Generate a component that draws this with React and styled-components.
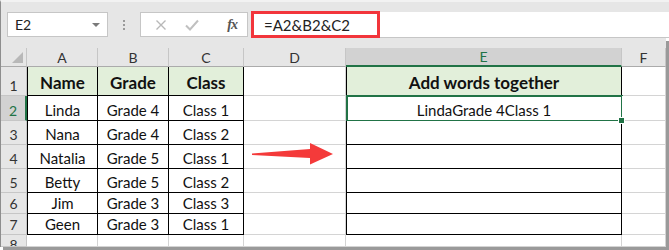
import React from "react"
import styled, { createGlobalStyle } from "styled-components"

const Global = createGlobalStyle`
  html, body {
    margin: 0;
    padding: 0;
    background: #ffffff;
  }
  body {
    font-family: Lato, "Open Sans", sans-serif;
  }
`

const Frame = styled.div`
  width: 669px;
  height: 250px;
  overflow: hidden;
  background: #ffffff;
  display: flex;
  flex-direction: column;
`

const Toolbar = styled.div`
  height: 38px;
  box-sizing: border-box;
  background: #e6e6e6;
  border-left: 1px solid #8e8e8e;
  border-top: 2px solid #f2f2f2;
  padding-top: 10px;
  display: flex;
  align-items: stretch;
`

const NameBox = styled.div`
  width: 101px;
  height: 25px;
  box-sizing: border-box;
  margin-left: 6px;
  background: #ffffff;
  border: 1px solid #c6c6c6;
  display: flex;
  align-items: center;
  justify-content: space-between;
  padding: 0 7px 0 7px;
  font-size: 14px;
  color: #222;
`

const Caret = styled.span`
  width: 0;
  height: 0;
  border-left: 4px solid transparent;
  border-right: 4px solid transparent;
  border-top: 4px solid #7a7a7a;
`

const Dots = styled.div`
  width: 32px;
  display: flex;
  flex-direction: column;
  align-items: center;
  justify-content: center;
  gap: 2px;
  span {
    width: 2px;
    height: 2px;
    background: #9a9a9a;
  }
`

const FxBox = styled.div`
  width: 108px;
  height: 25px;
  box-sizing: border-box;
  background: #ffffff;
  border: 1px solid #c6c6c6;
  display: flex;
  align-items: center;
  padding: 0 10px 0 14px;
  gap: 18px;
  color: #b8b8b8;
`

const Fx = styled.span`
  margin-left: auto;
  font-family: "Liberation Serif", serif;
  font-style: italic;
  font-weight: bold;
  font-size: 14px;
  color: #555;
  letter-spacing: -1px;
`

const FormulaBar = styled.div`
  flex: 1;
  margin-left: 3px;
  height: 26px;
  box-sizing: border-box;
  background: #ffffff;
  border-bottom: 1px solid #c6c6c6;
  display: flex;
`

const Highlight = styled.div`
  width: 129px;
  height: 27px;
  margin-top: -1px;
  box-sizing: border-box;
  border: 3px solid #f2353b;
  display: flex;
  align-items: center;
  padding-left: 10px;
  font-size: 15px;
  color: #222;
`

const SheetWrap = styled.div`
  position: relative;
  width: 666px;
  height: 209px;
  box-sizing: border-box;
  background: #e6e6e6;
  border-left: 1px solid #8e8e8e;
  padding-top: 10px;
  box-shadow: 3px 3px 0 #9a9a9a;
`

const Grid = styled.div`
  display: grid;
  grid-template-columns: 26px 71px 71px 75px 102px 276px 44px;
  grid-template-rows: 19px 29px 25px 24px 24px 24px 21px 21px 12px;
  background: #ffffff;
`

const Corner = styled.div`
  position: relative;
  background: #e6e6e6;
  border-right: 1px solid #c6c6c6;
  border-bottom: 1px solid #ababab;
  &::after {
    content: "";
    position: absolute;
    right: 3px;
    bottom: 3px;
    border-left: 11px solid transparent;
    border-bottom: 11px solid #b8b8b8;
  }
`

const ColHead = styled.div`
  background: ${p => (p.$active ? "#d2d2d2" : "#e6e6e6")};
  color: ${p => (p.$active ? "#217346" : "#333")};
  border-right: 1px solid #c6c6c6;
  border-bottom: ${p => (p.$active ? "2px solid #217346" : "1px solid #ababab")};
  display: flex;
  align-items: center;
  justify-content: center;
  font-size: 14px;
`

const RowHead = styled.div`
  background: ${p => (p.$active ? "#d2d2d2" : "#e6e6e6")};
  color: ${p => (p.$active ? "#217346" : "#333")};
  border-right: ${p => (p.$active ? "2px solid #217346" : "1px solid #c6c6c6")};
  border-bottom: 1px solid #c6c6c6;
  display: flex;
  align-items: ${p => (p.$clipped ? "flex-start" : "flex-end")};
  justify-content: center;
  padding: ${p => (p.$clipped ? "2px 0 0" : "0 0 1px")};
  line-height: 16px;
  font-size: 14px;
  overflow: hidden;
`

const Cell = styled.div`
  position: relative;
  box-sizing: border-box;
  background: ${p => (p.$fill ? "#e2efda" : "#ffffff")};
  border-right: 1px solid ${p => (p.$boxed ? "#000" : "#d4d4d4")};
  border-bottom: 1px solid ${p => (p.$boxed ? "#000" : "#d4d4d4")};
  border-left: ${p => (p.$openLeft ? "1px solid #000" : "none")};
  display: flex;
  align-items: flex-end;
  justify-content: center;
  padding-bottom: ${p => (p.$bold ? "2px" : "1px")};
  font-size: ${p => (p.$bold ? "17px" : "15px")};
  font-weight: ${p => (p.$bold ? 700 : 400)};
  color: #111;
  white-space: nowrap;
  ${p =>
    p.$selected &&
    `
    &::after {
      content: "";
      position: absolute;
      left: -1px;
      top: -1px;
      right: -2px;
      bottom: -2px;
      border: 2px solid #217346;
    }
    &::before {
      content: "";
      position: absolute;
      right: -4px;
      bottom: -4px;
      width: 5px;
      height: 5px;
      background: #217346;
      border: 1px solid #fff;
      z-index: 2;
    }
  `}
`

const Arrow = styled.svg`
  position: absolute;
  left: 251px;
  top: 105px;
`

const cols = ["A", "B", "C", "D", "E", "F"]

const people = [
  ["Name", "Grade", "Class"],
  ["Linda", "Grade 4", "Class 1"],
  ["Nana", "Grade 4", "Class 2"],
  ["Natalia", "Grade 5", "Class 1"],
  ["Betty", "Grade 5", "Class 2"],
  ["Jim", "Grade 3", "Class 3"],
  ["Geen", "Grade 3", "Class 1"],
]

const combined = ["Add words together", "LindaGrade 4Class 1", "", "", "", "", ""]

export default function App() {
  const rows = [...people, null]

  return (
    <Frame>
      <Global />
      <Toolbar>
        <NameBox>
          E2
          <Caret />
        </NameBox>
        <Dots>
          <span />
          <span />
          <span />
        </Dots>
        <FxBox>
          <svg width="12" height="12" viewBox="0 0 12 12">
            <path d="M1.5 1.5l9 9M10.5 1.5l-9 9" stroke="#b8b8b8" strokeWidth="1.4" fill="none" />
          </svg>
          <svg width="14" height="12" viewBox="0 0 14 12">
            <path d="M1 6.5l4 4L13 1.5" stroke="#c0c0c0" strokeWidth="2" fill="none" />
          </svg>
          <Fx>fx</Fx>
        </FxBox>
        <FormulaBar>
          <Highlight>=A2&amp;B2&amp;C2</Highlight>
        </FormulaBar>
      </Toolbar>

      <SheetWrap>
        <Grid>
          <Corner />
          {cols.map(c => (
            <ColHead key={c} $active={c === "E"}>
              {c}
            </ColHead>
          ))}
          {rows.map((r, i) => (
            <React.Fragment key={`row${i}`}>
              <RowHead $active={i === 1} $clipped={!r}>
                {i + 1}
              </RowHead>
              {r ? (
                r.map((v, j) => (
                  <Cell key={`c${i}${j}`} $boxed $fill={i === 0} $bold={i === 0} $openLeft={j === 0}>
                    {v}
                  </Cell>
                ))
              ) : (
                <>
                  <Cell />
                  <Cell />
                  <Cell />
                </>
              )}
              <Cell />
              {r ? (
                <Cell $boxed $openLeft $fill={i === 0} $bold={i === 0} $selected={i === 1}>
                  {combined[i]}
                </Cell>
              ) : (
                <Cell />
              )}
              <Cell />
            </React.Fragment>
          ))}
        </Grid>
        <Arrow width="82" height="22" viewBox="0 0 82 22">
          <path d="M0 10.5 L58 6 L58 0 L81 11 L58 21.5 L58 15 L0 12 Z" fill="#f43a3a" />
        </Arrow>
      </SheetWrap>
    </Frame>
  )
}
